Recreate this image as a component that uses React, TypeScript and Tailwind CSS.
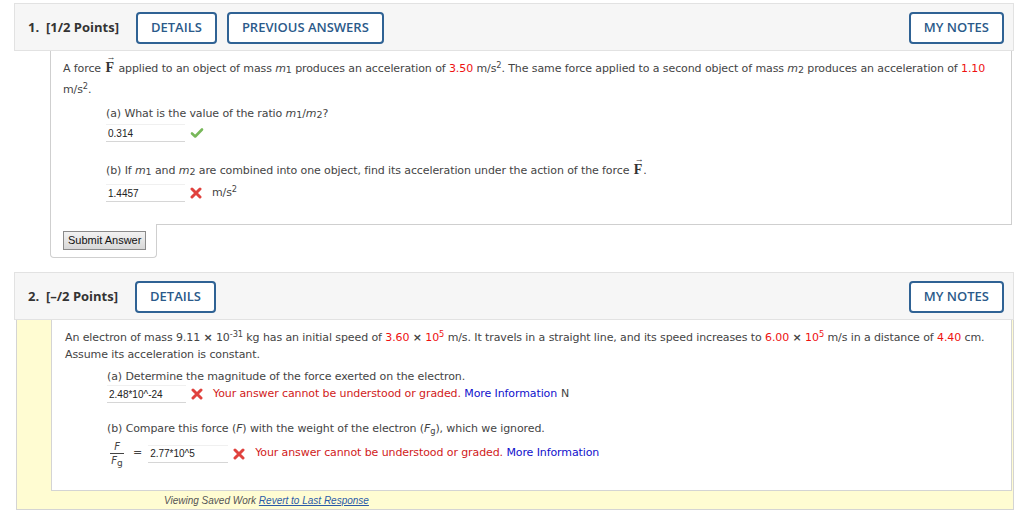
import React from 'react';

const body = "font-['DejaVu_Sans',Verdana,sans-serif] text-[11px] tracking-[-0.1px] text-[#444]";

function HeaderButton({ label }: { label: string }) {
  return (
    <button className="h-[32px] px-[13px] rounded-[4px] border-2 border-[#2f6294] bg-white font-['Open_Sans',sans-serif] text-[13px] font-semibold text-[#2b5a8a]">
      {label}
    </button>
  );
}

function QuestionHeader({ num, points, buttons }: { num: string; points: string; buttons: string[] }) {
  return (
    <div className="h-[48px] ml-[14px] mr-[10px] bg-[#f6f6f6] border border-[#e2e2e2] flex items-center pt-[1px] pl-[13px] pr-[9px]">
      <span className="font-['Open_Sans',sans-serif] text-[13px] font-bold text-[#333] mr-[17px]">
        {num}&nbsp; {points}
      </span>
      <div className="flex gap-[10px]">
        {buttons.map((b) => (
          <HeaderButton key={b} label={b} />
        ))}
      </div>
      <div className="ml-auto">
        <HeaderButton label="MY NOTES" />
      </div>
    </div>
  );
}

function VecF() {
  return (
    <span className="relative inline-block font-['Liberation_Serif',serif] text-[14px] font-bold text-[#333] leading-none mx-[1px] tracking-normal">
      <span className="absolute left-[1px] -top-[8px] text-[9px] font-normal">&#8594;</span>
      F
    </span>
  );
}

function M({ sub }: { sub: string }) {
  return (
    <span className="italic">
      m<sub className="not-italic text-[9.5px] relative top-[1px]">{sub}</sub>
    </span>
  );
}

function Red({ children }: { children: React.ReactNode }) {
  return <span className="text-[#ee1111]">{children}</span>;
}

function Input({ value, w = 'w-[79px]' }: { value: string; w?: string }) {
  return (
    <div className={`${w} h-[18px] border-b border-[#d6d6d6] border-t border-t-[#f0f0f0] flex items-center pl-[2px] font-['Liberation_Sans',Arial,sans-serif] text-[10px] tracking-normal text-[#222]`}>
      {value}
    </div>
  );
}

function Check() {
  return (
    <svg width="14" height="12" viewBox="0 0 14 12" className="ml-[5px]">
      <path d="M2 6.5 L5.2 9.5 L12 2.5" fill="none" stroke="#78b85a" strokeWidth="2.6" strokeLinecap="round" strokeLinejoin="round" />
    </svg>
  );
}

function Cross() {
  return (
    <svg width="12" height="12" viewBox="0 0 12 12" className="ml-[5px]">
      <path d="M2 2 L10 10 M10 2 L2 10" stroke="#e0423e" strokeWidth="3" strokeLinecap="round" />
    </svg>
  );
}

function ErrMsg() {
  return (
    <span className="ml-[10px]">
      <span className="text-[#d11a1a]">Your answer cannot be understood or graded.</span>{' '}
      <span className="text-[#1010cc]">More Information</span>
    </span>
  );
}

export default function App() {
  return (
    <div className="w-[1024px] h-[526px] bg-white pt-[3px] overflow-hidden">
      {/* Question 1 */}
      <QuestionHeader num="1." points="[1/2 Points]" buttons={['DETAILS', 'PREVIOUS ANSWERS']} />
      <div className="ml-[50px] mr-[12px]">
        <div className={`${body} border-l border-r border-[#cfcfcf] pl-[12px] pr-[4px] pt-[7px] h-[173px]`}>
          <p className="leading-[21px]">
            A force <VecF /> applied to an object of mass <M sub="1" /> produces an acceleration of <Red>3.50</Red> m/s<sup>2</sup>. The same force applied to a second object of mass <M sub="2" /> produces an acceleration of <Red>1.10</Red>
            <br />
            m/s<sup>2</sup>.
          </p>
          <div className="pl-[43px] mt-[5px]">
            <p className="leading-[17px]">
              (a) What is the value of the ratio <M sub="1" />/<M sub="2" />?
            </p>
            <div className="flex items-center mt-[2px]">
              <Input value="0.314" />
              <Check />
            </div>
            <p className="leading-[17px] mt-[20px]">
              (b) If <M sub="1" /> and <M sub="2" /> are combined into one object, find its acceleration under the action of the force <VecF />.
            </p>
            <div className="flex items-center mt-[5px]">
              <Input value="1.4457" />
              <Cross />
              <span className="ml-[10px]">
                m/s<sup>2</sup>
              </span>
            </div>
          </div>
        </div>
        <div className="flex">
          <div className="w-[107px] h-[34px] border-l border-r border-b border-[#cfcfcf] rounded-b-[4px] flex items-center pl-[12px]">
            <button className="h-[19px] px-[4px] border border-[#8a8a8a] bg-gradient-to-b from-[#f2f2f2] to-[#d8d8d8] font-['Liberation_Sans',Arial,sans-serif] text-[11px] text-[#111] leading-none">
              Submit Answer
            </button>
          </div>
          <div className="flex-1 border-t border-r border-[#cfcfcf] h-[1px]" />
        </div>
      </div>

      {/* Question 2 */}
      <div className="mt-[14px]">
        <QuestionHeader num="2." points="[–/2 Points]" buttons={['DETAILS']} />
        <div className="ml-[16px] mr-[10px] bg-[#fffcd2] border-l border-r border-b border-[#d4d4d4]">
          <div className={`${body} ml-[34px] mr-[1px] bg-white border-l border-r border-b border-[#d4d4d4] h-[171px] pl-[13px] pr-[4px] pt-[9px]`}>
            <p className="leading-[17px]">
              An electron of mass 9.11 <b>×</b> 10<sup>-31</sup> kg has an initial speed of <Red>3.60</Red> <b>×</b> <Red>10<sup>5</sup></Red> m/s. It travels in a straight line, and its speed increases to <Red>6.00</Red> <b>×</b> <Red>10<sup>5</sup></Red> m/s in a distance of <Red>4.40</Red> cm.
              <br />
              Assume its acceleration is constant.
            </p>
            <div className="pl-[42px] mt-[5px]">
              <p className="leading-[17px]">(a) Determine the magnitude of the force exerted on the electron.</p>
              <div className="flex items-center">
                <Input value="2.48*10^-24" />
                <Cross />
                <ErrMsg />
                <span className="ml-[4px]">N</span>
              </div>
              <p className="leading-[17px] mt-[17px]">
                (b) Compare this force (<i>F</i>) with the weight of the electron (<i>F</i><sub>g</sub>), which we ignored.
              </p>
              <div className="flex items-center mt-[4px]">
                <div className="flex flex-col items-center mx-[3px] leading-[11px] text-[10px]">
                  <i className="pb-[1px]">F</i>
                  <div className="w-[14px] border-t border-[#444]" />
                  <span className="pt-[1px]">
                    <i>F</i>
                    <sub className="text-[9px]">g</sub>
                  </span>
                </div>
                <span className="ml-[6px] mr-[6px]">=</span>
                <Input value="2.77*10^5" w="w-[80px]" />
                <Cross />
                <ErrMsg />
              </div>
            </div>
          </div>
          <div className="h-[18px] flex items-center pl-[147px] font-['Liberation_Sans',Arial,sans-serif] text-[10px] italic text-[#555]">
            Viewing Saved Work&nbsp;<span className="text-[#2a5aa8] underline">Revert to Last Response</span>
          </div>
        </div>
      </div>
    </div>
  );
}
